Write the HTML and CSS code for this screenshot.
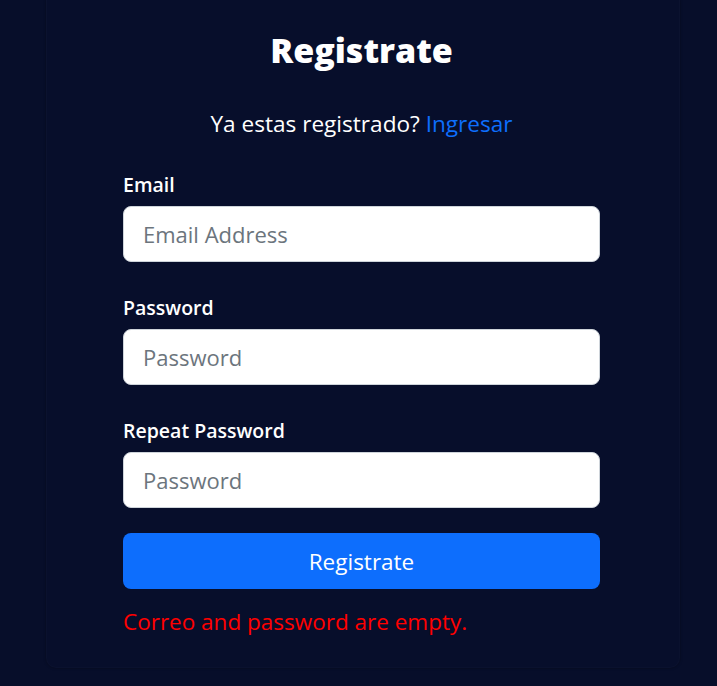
FILE: index.html
```html
<!DOCTYPE html>
<html lang="es">
<head>
<meta charset="utf-8">
<title>Registrate</title>
<link rel="stylesheet" href="styles.css">
</head>
<body>
<main class="page">
  <section class="card">
    <h1 class="title">Registrate</h1>
    <p class="lead">Ya estas registrado? <a class="link" href="#">Ingresar</a></p>
    <form class="form">
      <div class="field">
        <label class="label" for="email">Email</label>
        <input class="input" id="email" type="email" placeholder="Email Address">
      </div>
      <div class="field">
        <label class="label" for="pass">Password</label>
        <input class="input" id="pass" type="password" placeholder="Password">
      </div>
      <div class="field">
        <label class="label" for="pass2">Repeat Password</label>
        <input class="input" id="pass2" type="password" placeholder="Password">
      </div>
      <button class="btn" type="button">Registrate</button>
      <p class="error">Correo and password are empty.</p>
    </form>
  </section>
</main>
</body>
</html>
```

FILE: styles.css
```css
* { box-sizing: border-box; }
html, body { margin: 0; padding: 0; }
body {
  background: #070e2a;
  font-family: "Open Sans", "Noto Sans", sans-serif;
  color: #ffffff;
  height: 686px;
  overflow: hidden;
}
.page {
  padding-left: 46px;
}
.card {
  width: 634px;
  height: 668px;
  background: #070e2b;
  border-radius: 0 0 10px 10px;
  box-shadow: 0 0 3px rgba(0, 0, 0, 0.35);
  border: 1px solid rgba(255, 255, 255, 0.015);
  border-top: none;
  padding: 28px 79px 0 76px;
}
.title {
  margin: 0;
  text-align: center;
  font-size: 34px;
  line-height: 44px;
  font-weight: 800;
}
.lead {
  margin: 37px 0 0;
  text-align: center;
  font-size: 22.6px;
  line-height: 30px;
}
.link {
  color: #0d6efd;
  text-decoration: none;
}
.form {
  margin-top: 33px;
  display: flex;
  flex-direction: column;
}
.field {
  display: flex;
  flex-direction: column;
  margin-bottom: 33px;
}
.field:nth-child(3) { margin-bottom: 25px; }
.label {
  font-size: 19.5px;
  line-height: 26px;
  font-weight: 600;
  margin-bottom: 8px;
}
.input {
  height: 56px;
  border: 1px solid #ced4da;
  border-radius: 8px;
  background: #ffffff;
  padding: 0 19px;
  font-family: inherit;
  font-size: 22px;
  color: #212529;
  outline: none;
}
.input::placeholder { color: #6c757d; }
.btn {
  height: 56px;
  border: none;
  border-radius: 8px;
  background: #0d6efd;
  color: #ffffff;
  font-family: inherit;
  font-size: 22.5px;
  cursor: pointer;
}
.error {
  margin: 18px 0 0;
  color: #ff0000;
  font-size: 22.5px;
  line-height: 30px;
}
```
